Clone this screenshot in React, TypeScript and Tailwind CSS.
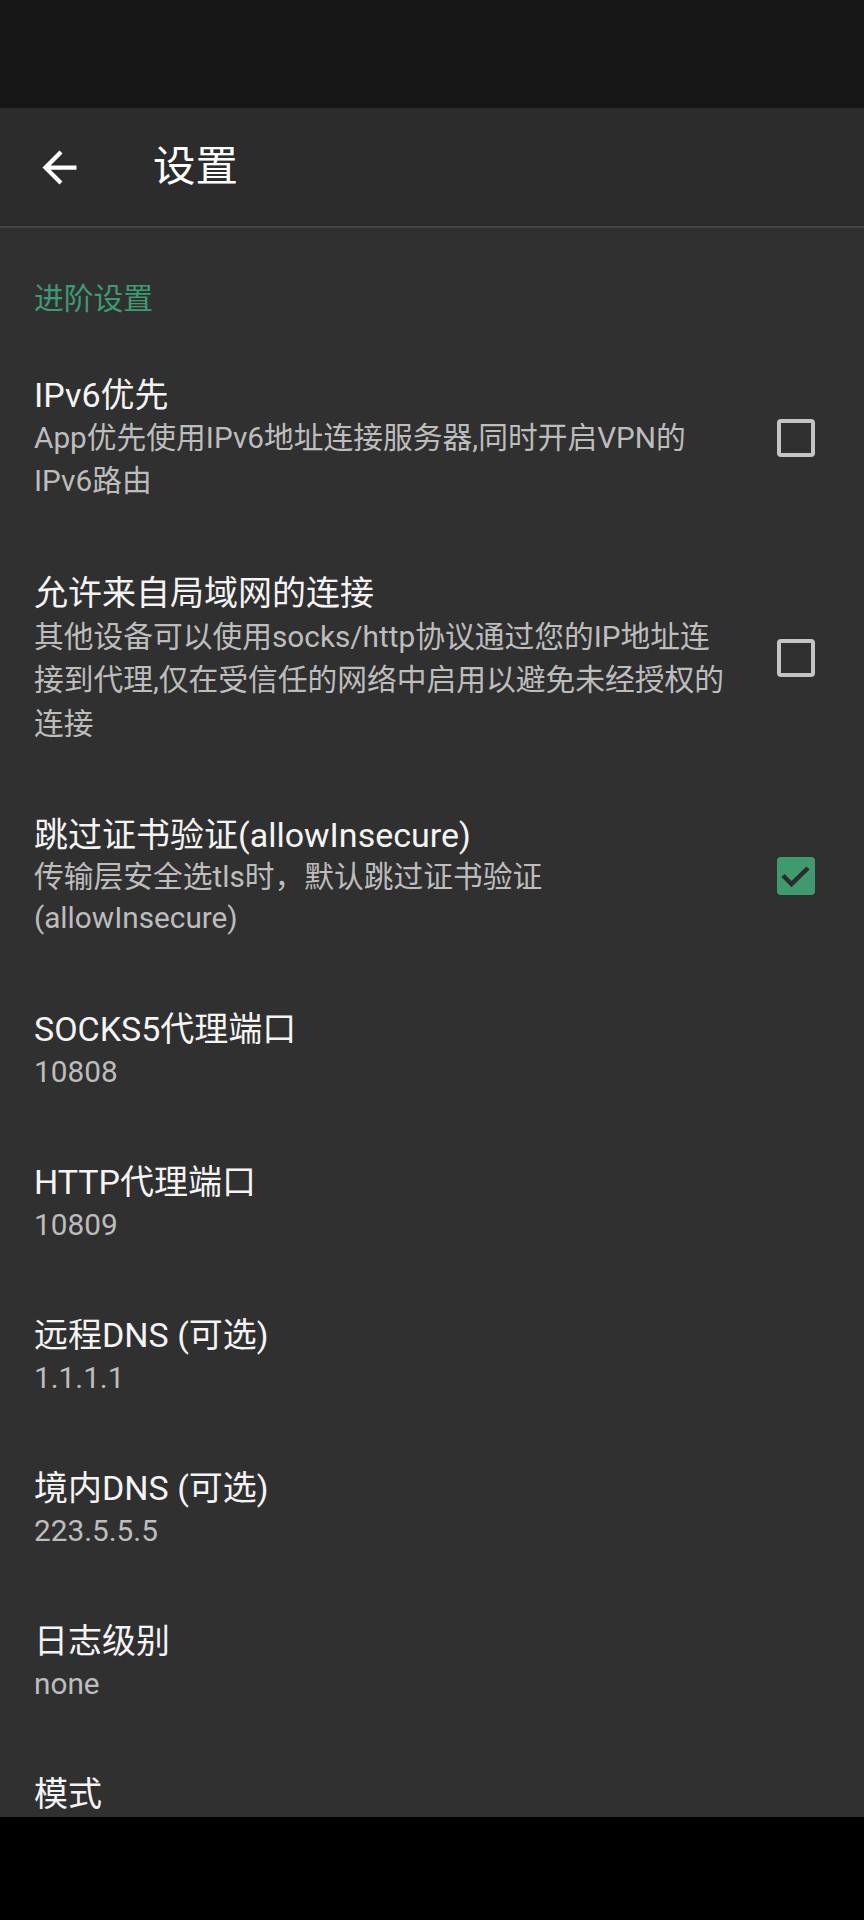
import React from 'react';

type Pref = {
  title: string;
  summary?: string;
  checked?: boolean;
  lh: string;
};

const prefs: Pref[] = [
  { title: 'IPv6优先', summary: 'App优先使用IPv6地址连接服务器,同时开启VPN的IPv6路由', checked: false, lh: 'leading-[42.8px]' },
  {
    title: '允许来自局域网的连接',
    summary: '其他设备可以使用socks/http协议通过您的IP地址连接到代理,仅在受信任的网络中启用以避免未经授权的连接',
    checked: false,
    lh: 'leading-[43.5px]',
  },
  { title: '跳过证书验证(allowInsecure)', summary: '传输层安全选tls时，默认跳过证书验证(allowInsecure)', checked: true, lh: 'leading-[40.8px]' },
  { title: 'SOCKS5代理端口', summary: '10808', lh: 'leading-[41px]' },
  { title: 'HTTP代理端口', summary: '10809', lh: 'leading-[41px]' },
  { title: '远程DNS (可选)', summary: '1.1.1.1', lh: 'leading-[41px]' },
  { title: '境内DNS (可选)', summary: '223.5.5.5', lh: 'leading-[41px]' },
  { title: '日志级别', summary: 'none', lh: 'leading-[41px]' },
  { title: '模式', summary: 'VPN', lh: 'leading-[41px]' },
];

const font = "font-['Roboto','Noto_Sans_CJK_SC',sans-serif]";

const CheckBox: React.FC<{ checked: boolean }> = ({ checked }) =>
  checked ? (
    <div className="w-[38px] h-[38px] rounded-[4px] bg-[#3f9a6e] shrink-0">
      <svg width="38" height="38" viewBox="0 0 38 38">
        <polyline points="6,18.5 14.5,27 31,11" fill="none" stroke="#2c2c2c" strokeWidth="4.5" />
      </svg>
    </div>
  ) : (
    <div className="w-[38px] h-[38px] rounded-[4px] border-[4px] border-[#c4c4c4] shrink-0" />
  );

const Row: React.FC<{ pref: Pref }> = ({ pref }) => (
  <div className="flex items-center px-[34px] py-[34px]">
    <div className="flex-1 min-w-0">
      <div className="text-[34px] leading-[44px] text-[#f4f4f4]">{pref.title}</div>
      {pref.summary && <div className={`text-[29.75px] text-[#bdbdbd] ${pref.lh}`}>{pref.summary}</div>}
    </div>
    {pref.checked !== undefined && (
      <div className="ml-[47px] mr-[15px]">
        <CheckBox checked={pref.checked} />
      </div>
    )}
  </div>
);

export default function App() {
  return (
    <div className={`w-full h-[1920px] flex flex-col overflow-hidden bg-[#303030] ${font}`}>
      {/* status bar */}
      <div className="h-[108px] bg-[#171717] shrink-0" />

      {/* toolbar */}
      <div className="h-[118px] bg-[#2c2c2c] flex items-center shrink-0">
        <svg className="ml-[34px]" width="51" height="51" viewBox="0 0 24 24">
          <path d="M20 11H7.83l5.59-5.59L12 4l-8 8 8 8 1.41-1.41L7.83 13H20v-2z" fill="#ffffff" />
        </svg>
        <div className="ml-[68px] text-[42.5px] leading-none text-white">设置</div>
      </div>
      <div className="h-[2px] bg-[#444444] shrink-0" />

      {/* preference list */}
      <div className="flex-1 overflow-hidden">
        <div className="px-[34px] pt-[50px] pb-[19px] text-[29.75px] leading-[42px] text-[#3d9a72]">进阶设置</div>
        {prefs.map((p) => (
          <Row key={p.title} pref={p} />
        ))}
      </div>

      {/* navigation bar */}
      <div className="h-[103px] bg-black shrink-0" />
    </div>
  );
}
